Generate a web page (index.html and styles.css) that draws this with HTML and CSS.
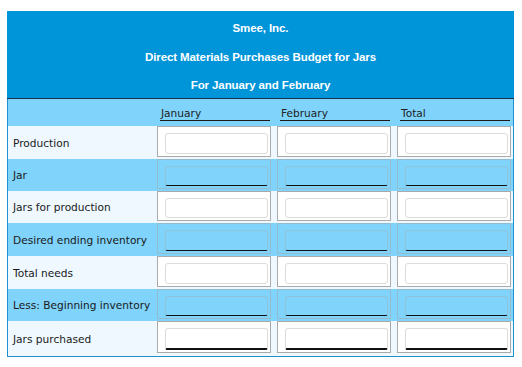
FILE: index.html
```html
<!DOCTYPE html>
<html>
<head>
<meta charset="utf-8">
<link rel="stylesheet" href="styles.css">
</head>
<body>
<div class="sheet">
  <div class="title">
    <div class="tline">Smee, Inc.</div>
    <div class="tline">Direct Materials Purchases Budget for Jars</div>
    <div class="tline">For January and February</div>
  </div>
  <div class="grid">
    <div class="colhead blank"></div>
    <div class="colhead"><span class="ch">January</span></div>
    <div class="colhead"><span class="ch">February</span></div>
    <div class="colhead last"><span class="ch">Total</span></div>

    <div class="label light">Production</div>
    <div class="cell light"><div class="box"><div class="inp"></div></div></div>
    <div class="cell light"><div class="box"><div class="inp"></div></div></div>
    <div class="cell light last"><div class="box"><div class="inp"></div></div></div>

    <div class="label blue">Jar</div>
    <div class="cell blue"><div class="box"><div class="inp"></div></div></div>
    <div class="cell blue"><div class="box"><div class="inp"></div></div></div>
    <div class="cell blue last"><div class="box"><div class="inp"></div></div></div>

    <div class="label light">Jars for production</div>
    <div class="cell light"><div class="box"><div class="inp"></div></div></div>
    <div class="cell light"><div class="box"><div class="inp"></div></div></div>
    <div class="cell light last"><div class="box"><div class="inp"></div></div></div>

    <div class="label blue">Desired ending inventory</div>
    <div class="cell blue"><div class="box"><div class="inp"></div></div></div>
    <div class="cell blue"><div class="box"><div class="inp"></div></div></div>
    <div class="cell blue last"><div class="box"><div class="inp"></div></div></div>

    <div class="label light">Total needs</div>
    <div class="cell light"><div class="box"><div class="inp"></div></div></div>
    <div class="cell light"><div class="box"><div class="inp"></div></div></div>
    <div class="cell light last"><div class="box"><div class="inp"></div></div></div>

    <div class="label blue">Less: Beginning inventory</div>
    <div class="cell blue"><div class="box"><div class="inp"></div></div></div>
    <div class="cell blue"><div class="box"><div class="inp"></div></div></div>
    <div class="cell blue last"><div class="box"><div class="inp"></div></div></div>

    <div class="label light">Jars purchased</div>
    <div class="cell light total"><div class="box"><div class="inp"></div></div></div>
    <div class="cell light total"><div class="box"><div class="inp"></div></div></div>
    <div class="cell light total last"><div class="box"><div class="inp"></div></div></div>
  </div>
</div>
</body>
</html>
```
FILE: styles.css
```css
html, body {
  margin: 0;
  padding: 0;
  background: #ffffff;
}
body {
  padding: 11px 0 0 7px;
  font-family: "DejaVu Sans", Verdana, sans-serif;
}
.sheet {
  width: 505px;
  border: 1px solid #1e8fcf;
  border-top: 0;
  background: #eef8fe;
}
.title {
  background: #0094d9;
  color: #ffffff;
  height: 88px;
  margin: 0 -1px;
  border-bottom: 1px solid #15324a;
  display: flex;
  flex-direction: column;
  justify-content: space-between;
  align-items: center;
  padding: 10px 0 6px;
  box-sizing: border-box;
  font-family: "Liberation Sans", Arial, sans-serif;
  font-weight: bold;
  font-size: 11.5px;
  letter-spacing: -0.1px;
  line-height: 14px;
}
.grid {
  display: grid;
  grid-template-columns: 149px 120px 120px 116px;
  grid-template-rows: 27px 33px 32px 32px 33px 33px 32px 35px;
  font-size: 10.6px;
  color: #1a1a1a;
}
.colhead {
  background: #80d3fa;
  display: flex;
  align-items: flex-end;
  padding: 0 7px 5px 3px;
}
.colhead.last {
  padding-right: 3px;
}
.colhead.blank {
  padding: 0;
}
.ch {
  flex: 1;
  border-bottom: 1px solid #1a1a1a;
  padding: 0 0 0 1px;
  line-height: 14px;
  color: #222;
}
.label {
  display: flex;
  align-items: center;
  padding-left: 5px;
}
.light {
  background: #eef8fe;
}
.blue {
  background: #80d3fa;
}
.cell {
  padding: 0 6px 2px 0;
  display: flex;
}
.cell.last {
  padding-right: 2px;
}
.cell.total {
  padding-bottom: 3px;
}
.box {
  flex: 1;
  box-sizing: border-box;
  border: 1px solid #aaaaaa;
  padding: 6px 2px 2px 7px;
  display: flex;
}
.light .box {
  background: #ffffff;
}
.blue .box {
  background: #80d3fa;
  border-color: #93bccf;
}
.inp {
  flex: 1;
  box-sizing: border-box;
  border: 1px solid #dcdcdc;
  border-radius: 3px;
  background: #ffffff;
}
.blue .inp {
  background: #80d3fa;
  border-color: #8fc3dc;
  border-bottom: 1px solid #111111;
  border-radius: 3px 3px 2px 2px;
}
.total .inp {
  border-bottom: 2px solid #111111;
  border-radius: 3px 3px 2px 2px;
}
```
